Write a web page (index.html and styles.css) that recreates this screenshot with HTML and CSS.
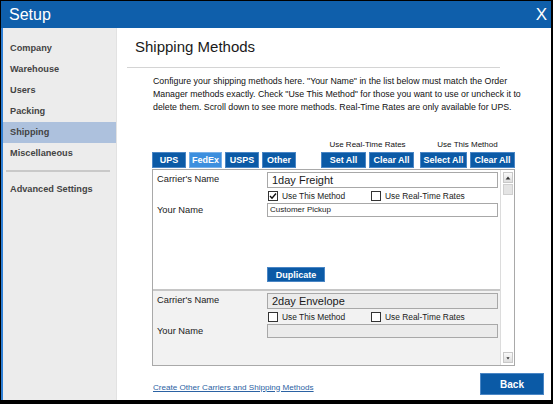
FILE: index.html
```html
<!DOCTYPE html>
<html lang="en">
<head>
  <meta charset="UTF-8" />
  <meta name="viewport" content="width=device-width, initial-scale=1.0" />
  <title>Setup - Shipping Methods</title>
  <link rel="stylesheet" href="styles.css">
</head>
<body>
  <div class="window">
    <div class="titlebar">
      <span class="title">Setup</span>
      <span class="close">X</span>
    </div>

    <div class="body">
      <ul class="sidebar">
        <li>Company</li>
        <li>Warehouse</li>
        <li>Users</li>
        <li>Packing</li>
        <li class="active">Shipping</li>
        <li>Miscellaneous</li>
        <li class="divider"></li>
        <li>Advanced Settings</li>
      </ul>

      <div class="content">
        <h1>Shipping Methods</h1>

        <div class="inner">
          <p class="intro">Configure your shipping methods here. "Your Name" in the list below must match the Order Manager methods exactly. Check "Use This Method" for those you want to use or uncheck it to delete them. Scroll down to see more methods. Real-Time Rates are only available for UPS.</p>

          <div class="toolbar">
            <div class="tabs">
              <button class="btn tab">UPS</button>
              <button class="btn tab active">FedEx</button>
              <button class="btn tab">USPS</button>
              <button class="btn tab">Other</button>
            </div>
            <div class="group rates">
              <div class="group-label">Use Real-Time Rates</div>
              <div class="group-btns">
                <button class="btn">Set All</button>
                <button class="btn">Clear All</button>
              </div>
            </div>
            <div class="group">
              <div class="group-label">Use This Method</div>
              <div class="group-btns">
                <button class="btn wide">Select All</button>
                <button class="btn">Clear All</button>
              </div>
            </div>
          </div>

          <div class="panel">
            <div class="list">
              <div class="method">
                <div class="label">Carrier's Name</div>
                <div class="field big">1day Freight</div>
                <div class="checks">
                  <span class="check"><span class="box"><svg viewBox="0 0 8 8" width="8" height="8"><path d="M1 4 L3 6.2 L7 1.5" fill="none" stroke="#111" stroke-width="1.4"/></svg></span>Use This Method</span>
                  <span class="check"><span class="box"></span>Use Real-Time Rates</span>
                </div>
                <div class="label mid">Your Name</div>
                <div class="field small">Customer Pickup</div>
                <div class="actions">
                  <button class="btn dup">Duplicate</button>
                </div>
              </div>

              <div class="method off">
                <div class="label">Carrier's Name</div>
                <div class="field big">2day Envelope</div>
                <div class="checks">
                  <span class="check"><span class="box"></span>Use This Method</span>
                  <span class="check"><span class="box"></span>Use Real-Time Rates</span>
                </div>
                <div class="label mid">Your Name</div>
                <div class="field small"></div>
              </div>
            </div>

            <div class="scrollbar">
              <div class="arrow"><svg viewBox="0 0 10 10" width="10" height="10"><path d="M2 7 L5 3 L8 7 Z" fill="#333"/></svg></div>
              <div class="thumb"></div>
              <div class="track"></div>
              <div class="arrow"><svg viewBox="0 0 10 10" width="10" height="10"><path d="M3 4 L5 7 L7 4 Z" fill="#333"/></svg></div>
            </div>
          </div>
        </div>

        <div class="footer">
          <a href="#" class="link">Create Other Carriers and Shipping Methods</a>
          <button class="btn back">Back</button>
        </div>
      </div>
    </div>
  </div>
</body>
</html>
```

FILE: styles.css
```css
html, body {
  margin: 0;
  padding: 0;
}
body {
  background: #000;
  width: 553px;
  height: 404px;
  overflow: hidden;
  font-family: "Liberation Sans", Arial, sans-serif;
  color: #1a1a1a;
}
.window {
  margin: 1px 0 0 1px;
  width: 548px;
  height: 399px;
  border-left: 2px solid #2f7fd4;
  background: #fff;
  display: flex;
  flex-direction: column;
}
.titlebar {
  flex-shrink: 0;
  height: 27px;
  background: #0f5fab;
  color: #fff;
  display: flex;
  align-items: center;
  justify-content: space-between;
  padding: 0 4px 0 6px;
  margin-left: -2px;
}
.title {
  font-size: 16px;
  padding-left: 2px;
}
.close {
  font-size: 17px;
}
.body {
  flex: 1;
  min-height: 0;
  display: flex;
}

/* left menu */
.sidebar {
  list-style: none;
  margin: 0;
  padding: 10px 0 0 0;
  width: 113px;
  background: #ececec;
  border-right: 1px solid #e2e2e2;
}
.sidebar li {
  height: 21px;
  line-height: 21px;
  padding-left: 7px;
  font-size: 9.2px;
  font-weight: bold;
  color: #444;
}
.sidebar li.active {
  background: #adc1dd;
}
.sidebar li.divider {
  height: 0;
  margin: 6px 6px 7px 3px;
  border-top: 2px solid #c9c9c9;
}

/* main */
.content {
  flex: 1;
  display: flex;
  flex-direction: column;
}
h1 {
  margin: 0 51px 0 10px;
  padding: 10px 0 11px 8px;
  font-size: 15px;
  line-height: 18px;
  font-weight: normal;
  color: #1a1a1a;
  border-bottom: 1px solid #d4d4d4;
}
.inner {
  padding-left: 35px;
  width: 363px;
}
.intro {
  margin: 7px -6px 0 1px;
  font-size: 8.8px;
  line-height: 13px;
  color: #111;
}
.btn {
  font-family: "Liberation Sans", Arial, sans-serif;
  background: #0b5aa6;
  color: #fff;
  border: 1px solid #4a86c5;
  font-size: 9px;
  font-weight: bold;
  height: 16px;
  padding: 0;
  margin: 0;
  cursor: pointer;
}
.btn.active {
  background: #3d8fde;
  border-color: #78b0e8;
}
.toolbar {
  margin-top: 25px;
  display: flex;
  align-items: flex-end;
}
.tabs {
  display: flex;
  gap: 3px;
}
.tab {
  width: 34px;
}
.tab.active {
  width: 33px;
}
.group {
  display: flex;
  flex-direction: column;
  align-items: center;
  margin-left: 6px;
}
.group.rates {
  margin-left: auto;
}
.group-label {
  font-size: 8px;
  line-height: 12px;
  margin-bottom: 1px;
  color: #111;
}
.group-btns {
  display: flex;
  gap: 3px;
}
.group-btns .btn {
  width: 45px;
}
.group-btns .btn.wide {
  width: 47px;
}

/* methods list */
.panel {
  margin-top: 1px;
  height: 195px;
  border: 1px solid #a9a9a9;
  display: flex;
}
.list {
  flex: 1;
  overflow: hidden;
  display: flex;
  flex-direction: column;
}
.method {
  display: grid;
  grid-template-columns: 110px 231px;
  align-content: start;
  padding: 2px 0 7px 4px;
  border-bottom: 2px solid #c6c6c6;
  font-size: 9.3px;
}
.method.off {
  flex: 1;
  background: #f2f2f2;
  border-bottom: none;
}
.label {
  line-height: 12px;
  padding-top: 1px;
  color: #1a1a1a;
}
.label.mid {
  align-self: center;
}
.field {
  border: 1px solid #a8a8a8;
  background: #fff;
  box-sizing: border-box;
  color: #1a1a1a;
}
.field.big {
  height: 16px;
  line-height: 14px;
  font-size: 11px;
  padding-left: 4px;
}
.field.small {
  height: 14px;
  line-height: 12px;
  font-size: 8px;
  padding-left: 2px;
  margin-top: 1px;
}
.off .field {
  background: #ebebeb;
}
.checks {
  grid-column: 2;
  display: flex;
  height: 12px;
  margin-top: 2px;
  align-items: center;
  font-size: 8.4px;
}
.check {
  display: flex;
  align-items: center;
  gap: 4px;
  width: 102px;
  padding-left: 1px;
  color: #1a1a1a;
}
.box {
  width: 8px;
  height: 8px;
  border: 1px solid #333;
  background: #fff;
  display: flex;
}
.actions {
  grid-column: 2;
  display: flex;
  margin-top: 50px;
}
.dup {
  width: 58px;
  height: 15px;
}

/* scrollbar */
.scrollbar {
  width: 13px;
  border-left: 1px solid #dcdcdc;
  display: flex;
  flex-direction: column;
  align-items: center;
  padding: 2px 0;
}
.arrow {
  width: 10px;
  height: 11px;
  border: 1px solid #c8c8c8;
  background: linear-gradient(#fafafa, #dedede);
  display: flex;
  align-items: center;
  justify-content: center;
  box-sizing: border-box;
}
.thumb {
  margin-top: 1px;
  width: 10px;
  height: 11px;
  box-sizing: border-box;
  border: 1px solid #cfcfcf;
  background: #e4e4e4;
}
.track {
  flex: 1;
}

/* footer */
.footer {
  display: flex;
  justify-content: space-between;
  align-items: center;
  padding: 7px 7px 0 35px;
}
.link {
  font-size: 8.1px;
  color: #2b62a3;
  margin-top: 6px;
  margin-left: 1px;
}
.back {
  width: 64px;
  height: 22px;
  font-size: 10px;
}
```
